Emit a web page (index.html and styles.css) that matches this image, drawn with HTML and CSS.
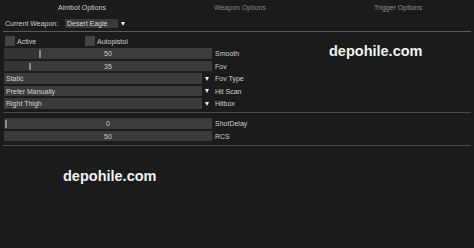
FILE: index.html
```html
<!DOCTYPE html>
<html>
<head>
<meta charset="utf-8">
<link rel="stylesheet" href="styles.css">
</head>
<body>
<div class="app">
  <div class="tabs">
    <div class="tab active">Aimbot Options</div>
    <div class="tab">Weapon Options</div>
    <div class="tab trig">Trigger Options</div>
  </div>
  <div class="weapon-row">
    <span class="wlabel">Current Weapon:</span>
    <span class="wselect">Desert Eagle</span>
    <span class="arrow-box"><span class="tri"></span></span>
  </div>
  <div class="sep top"></div>
  <div class="checks">
    <div class="check first"><span class="box"></span><span>Active</span></div>
    <div class="check"><span class="box"></span><span>Autopistol</span></div>
  </div>
  <div class="group g1">
    <div class="row">
      <div class="slider"><span class="fill" style="width:35px"></span><span class="thumb"></span><span class="val">50</span></div>
      <span class="label">Smooth</span>
    </div>
    <div class="row">
      <div class="slider"><span class="fill" style="width:25px"></span><span class="thumb"></span><span class="val">35</span></div>
      <span class="label">Fov</span>
    </div>
    <div class="row">
      <div class="select">Static</div>
      <span class="arrow-box"><span class="tri"></span></span>
      <span class="label">Fov Type</span>
    </div>
    <div class="row">
      <div class="select">Prefer Manually</div>
      <span class="arrow-box"><span class="tri"></span></span>
      <span class="label">Hit Scan</span>
    </div>
    <div class="row">
      <div class="select">Right Thigh</div>
      <span class="arrow-box"><span class="tri"></span></span>
      <span class="label">Hitbox</span>
    </div>
  </div>
  <div class="sep mid"></div>
  <div class="group g2">
    <div class="row">
      <div class="slider"><span class="fill" style="width:1px"></span><span class="thumb"></span><span class="val">0</span></div>
      <span class="label">ShotDelay</span>
    </div>
    <div class="row">
      <div class="slider"><span class="val">50</span></div>
      <span class="label">RCS</span>
    </div>
  </div>
  <div class="sep bot"></div>
</div>
<div class="wm wm1">depohile.com</div>
<div class="wm wm2">depohile.com</div>
</body>
</html>
```

FILE: styles.css
```css
html, body {
  margin: 0;
  padding: 0;
  background: #1b1b1b;
}
body {
  width: 474px;
  height: 248px;
  overflow: hidden;
  position: relative;
  font-family: "Liberation Sans", Arial, sans-serif;
  font-size: 7px;
  color: #cfcfcf;
}
.app {
  display: flex;
  flex-direction: column;
}
.tabs {
  display: flex;
  height: 16px;
  margin-left: 3px;
  width: 480px;
}
.tab {
  width: 158px;
  flex: none;
  text-align: center;
  line-height: 16px;
  color: #858585;
}
.tab.active { color: #cfcfcf; }
.tab.trig { color: #8e8e8e; }
.weapon-row {
  display: flex;
  align-items: center;
  height: 9px;
  margin-top: 3px;
  padding-left: 5px;
}
.wlabel { width: 60px; }
.wselect {
  width: 51px;
  height: 9px;
  line-height: 9px;
  padding-left: 2px;
  background: #3a3a3a;
  color: #d6d6d6;
}
.arrow-box {
  width: 10px;
  height: 100%;
  display: flex;
  align-items: center;
  justify-content: center;
  flex: none;
}
.tri {
  width: 0;
  height: 0;
  border-left: 2.5px solid transparent;
  border-right: 2.5px solid transparent;
  border-top: 4px solid #eeeeee;
}
.sep {
  height: 1px;
  margin: 0 3px;
  background: #4a4a4a;
}
.sep.top { margin-top: 3px; background: #5a5a5a; }
.sep.mid { margin-top: 3.7px; }
.sep.bot { margin-top: 4px; }
.checks {
  display: flex;
  height: 10px;
  margin-top: 4px;
  padding-left: 5px;
}
.check {
  display: flex;
  align-items: center;
  gap: 2px;
}
.check.first { width: 80px; }
.box {
  width: 10px;
  height: 10px;
  background: #454545;
}
.group {
  display: flex;
  flex-direction: column;
  gap: 2px;
  padding-left: 4px;
}
.g1 { margin-top: 2.3px; }
.g2 { margin-top: 5px; }
.row {
  display: flex;
  align-items: center;
  height: 10.5px;
}
.slider {
  position: relative;
  width: 208px;
  height: 100%;
  background: #3b3b3b;
  display: flex;
  align-items: center;
  justify-content: center;
}
.fill {
  position: absolute;
  left: 0;
  top: 0;
  bottom: 0;
  background: #343434;
}
.thumb {
  position: absolute;
  top: 2px;
  bottom: 1px;
  width: 1.5px;
  background: #8a8a8a;
}
.row:nth-child(1) .thumb { left: 35px; }
.row:nth-child(2) .thumb { left: 25px; }
.g2 .row:nth-child(1) .thumb { left: 1px; }
.val {
  position: relative;
  color: #d0d0d0;
}
.select {
  width: 196px;
  height: 100%;
  padding-left: 2px;
  background: #3b3b3b;
  display: flex;
  align-items: center;
  color: #d6d6d6;
}
.label {
  margin-left: 3px;
  color: #cfcfcf;
}
.wm {
  position: absolute;
  font-family: "Liberation Sans", Arial, sans-serif;
  font-weight: bold;
  font-size: 14.5px;
  line-height: 1;
  color: #f2f2f2;
  white-space: nowrap;
}
.wm1 { left: 329px; top: 44px; }
.wm2 { left: 63px; top: 169px; }
```
